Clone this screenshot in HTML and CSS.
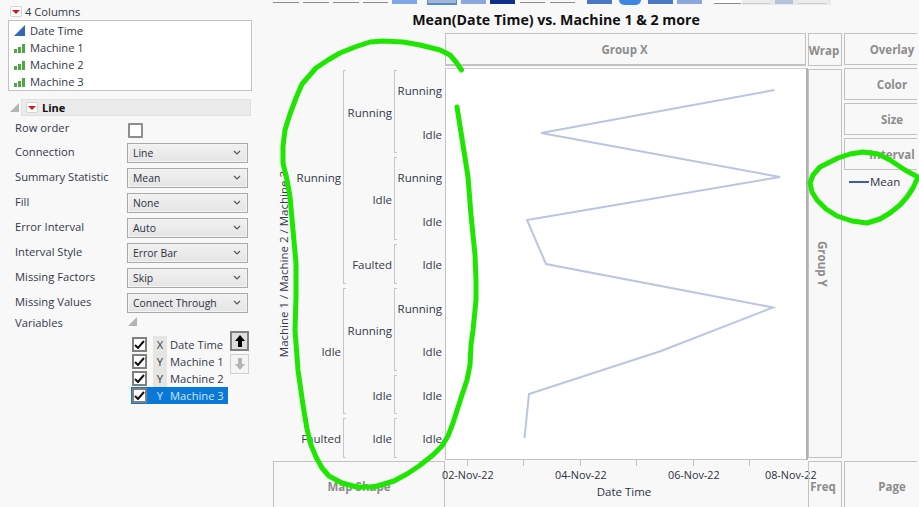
FILE: index.html
```html
<!DOCTYPE html>
<html lang="en">
<head>
    <meta charset="UTF-8">
    <title>Graph Builder</title>
    <link rel="stylesheet" href="styles.css">
</head>
<body>
<div class="app">
    <!-- left panel -->
    <div class="side">
        <div class="cols-head">
            <span class="red-btn"><i></i></span>
            <span>4 Columns</span>
        </div>
        <div class="col-list">
            <div class="col-item">
                <svg class="col-icon" viewBox="0 0 13 12"><polygon points="1,11 12,0 12,11" fill="#3565b5"/></svg>
                Date Time
            </div>
            <div class="col-item">
                <svg class="col-icon" viewBox="0 0 13 12"><g fill="#4ea843"><rect x="1" y="7" width="3" height="4"/><rect x="5" y="5" width="3" height="6"/><rect x="9" y="2" width="3" height="9"/></g></svg>
                Machine 1
            </div>
            <div class="col-item">
                <svg class="col-icon" viewBox="0 0 13 12"><g fill="#4ea843"><rect x="1" y="7" width="3" height="4"/><rect x="5" y="5" width="3" height="6"/><rect x="9" y="2" width="3" height="9"/></g></svg>
                Machine 2
            </div>
            <div class="col-item">
                <svg class="col-icon" viewBox="0 0 13 12"><g fill="#4ea843"><rect x="1" y="7" width="3" height="4"/><rect x="5" y="5" width="3" height="6"/><rect x="9" y="2" width="3" height="9"/></g></svg>
                Machine 3
            </div>
        </div>

        <div class="line-head">
            <svg class="corner" viewBox="0 0 9 9"><polygon points="0,9 9,0 9,9" fill="#b4b4b4"/></svg>
            <div class="line-bar">
                <span class="red-btn"><i></i></span>
                <b>Line</b>
            </div>
        </div>

        <div class="form">
            <label>Row order</label>
            <div><span class="plain-check"></span></div>
            <label class="up">Connection</label>
            <div class="select">Line<svg viewBox="0 0 8 5"><path d="M1 1l3 3 3-3"/></svg></div>
            <label class="up">Summary Statistic</label>
            <div class="select">Mean<svg viewBox="0 0 8 5"><path d="M1 1l3 3 3-3"/></svg></div>
            <label class="up">Fill</label>
            <div class="select">None<svg viewBox="0 0 8 5"><path d="M1 1l3 3 3-3"/></svg></div>
            <label class="up">Error Interval</label>
            <div class="select">Auto<svg viewBox="0 0 8 5"><path d="M1 1l3 3 3-3"/></svg></div>
            <label class="up">Interval Style</label>
            <div class="select">Error Bar<svg viewBox="0 0 8 5"><path d="M1 1l3 3 3-3"/></svg></div>
            <label class="up">Missing Factors</label>
            <div class="select">Skip<svg viewBox="0 0 8 5"><path d="M1 1l3 3 3-3"/></svg></div>
            <label class="up">Missing Values</label>
            <div class="select">Connect Through<svg viewBox="0 0 8 5"><path d="M1 1l3 3 3-3"/></svg></div>
        </div>

        <div class="vars">
            <div class="vars-label">Variables</div>
            <div class="vars-right">
                <svg class="corner" viewBox="0 0 9 9"><polygon points="0,9 9,0 9,9" fill="#b4b4b4"/></svg>
                <div class="vars-body">
                    <div class="var-list">
                        <div class="var-row">
                            <span class="check"><svg viewBox="0 0 11 9"><path d="M1 5l3 3 6-7"/></svg></span>
                            <span class="role">X</span>Date Time
                        </div>
                        <div class="var-row">
                            <span class="check"><svg viewBox="0 0 11 9"><path d="M1 5l3 3 6-7"/></svg></span>
                            <span class="role">Y</span>Machine 1
                        </div>
                        <div class="var-row">
                            <span class="check"><svg viewBox="0 0 11 9"><path d="M1 5l3 3 6-7"/></svg></span>
                            <span class="role">Y</span>Machine 2
                        </div>
                        <div class="var-row selected">
                            <span class="check"><svg viewBox="0 0 11 9"><path d="M1 5l3 3 6-7"/></svg></span>
                            <span class="role">Y</span>Machine 3
                        </div>
                    </div>
                    <div class="move-btns">
                        <span class="move on"><svg viewBox="0 0 10 12"><polygon points="5,0 10,6 7,6 7,12 3,12 3,6 0,6" fill="#000"/></svg></span>
                        <span class="move off"><svg viewBox="0 0 10 12"><polygon points="3,0 7,0 7,6 10,6 5,12 0,6 3,6" fill="#b4b4b4"/></svg></span>
                    </div>
                </div>
            </div>
        </div>
    </div>

    <!-- graph area -->
    <div class="main">
        <div class="toolbar">
            <i class="t-line t27"></i><i class="t-line t27"></i><i class="t-line t27"></i><i class="t-line t26"></i>
            <i class="t-blue t26"></i>
            <i class="t-active ml6"></i>
            <i class="t-grid t26"></i>
            <i class="t-navy t26"></i>
            <i class="t-line t26 ml1"></i><i class="t-line t26 ml1"></i>
            <i class="t-mid t26 ml8"></i>
            <i class="t-round ml3"></i>
            <i class="t-mid t26 ml3"></i>
            <i class="t-grid t26"></i>
            <i class="t-white ml8"></i>
            <div class="t-off">
                <i class="t-pale"></i><i class="t-slate"></i><i class="t-pale"></i>
            </div>
        </div>
        <div class="title">Mean(Date Time) vs. Machine 1 &amp; 2 more</div>

        <div class="builder">
            <div class="corner-cell"></div>
            <div class="zone group-x">Group X</div>
            <div class="zone wrap">Wrap</div>

            <div class="stack">
                <div class="zone stack-box">Overlay</div>
                <div class="zone stack-box">Color</div>
                <div class="zone stack-box">Size</div>
                <div class="zone stack-box">Interval</div>
                <div class="legend"><i></i>Mean</div>
            </div>

            <div class="y-axis">
                <div class="y-title"><span>Machine 1 / Machine 2 / Machine 3</span></div>
                <div class="tree">
                    <div class="group">
                        <div class="name">Running</div>
                        <div class="kids">
                            <div class="group">
                                <div class="name">Running</div>
                                <div class="kids">
                                    <div class="leaf">Running</div>
                                    <div class="leaf">Idle</div>
                                </div>
                            </div>
                            <div class="group">
                                <div class="name">Idle</div>
                                <div class="kids">
                                    <div class="leaf">Running</div>
                                    <div class="leaf">Idle</div>
                                </div>
                            </div>
                            <div class="group">
                                <div class="name">Faulted</div>
                                <div class="kids">
                                    <div class="leaf">Idle</div>
                                </div>
                            </div>
                        </div>
                    </div>
                    <div class="group">
                        <div class="name">Idle</div>
                        <div class="kids">
                            <div class="group">
                                <div class="name">Running</div>
                                <div class="kids">
                                    <div class="leaf">Running</div>
                                    <div class="leaf">Idle</div>
                                </div>
                            </div>
                            <div class="group">
                                <div class="name">Idle</div>
                                <div class="kids">
                                    <div class="leaf">Idle</div>
                                </div>
                            </div>
                        </div>
                    </div>
                    <div class="group">
                        <div class="name">Faulted</div>
                        <div class="kids">
                            <div class="group">
                                <div class="name">Idle</div>
                                <div class="kids">
                                    <div class="leaf">Idle</div>
                                </div>
                            </div>
                        </div>
                    </div>
                </div>
            </div>

            <div class="plot">
                <svg viewBox="0 0 359 390">
                    <polyline points="328.5,21 95,64 334,108 81,151 100,195 327,238.5 215,282 83,325 78.5,369"/>
                </svg>
            </div>
            <div class="zone group-y"><span>Group Y</span></div>

            <div class="zone map-shape">Map Shape</div>
            <div class="x-axis">
                <div class="ticks"><i></i><i></i><i></i><i></i><i></i><i></i></div>
                <div class="x-labels">
                    <span>02-Nov-22</span><span>04-Nov-22</span><span>06-Nov-22</span><span class="last">08-Nov-22</span>
                </div>
                <div class="x-title">Date Time</div>
            </div>
            <div class="zone freq">Freq</div>
            <div class="zone page">Page</div>
        </div>
    </div>
</div>

<!-- green marker drawn on top of the screenshot -->
<svg class="marker" viewBox="0 0 919 507">
    <polyline points="461.5,70 456,62 450,55 440,50 420,45 403,42 383,41 370,42 355,47 340,53 328,60 316,68 302,84 296,98 290,114 285,130 283,146 283,163 287,180 290,197 293,230 296,263 296,297 295,330 298,370 303,405 307,429 311,445 316,457 322,468 329,476 342,483 357,487 374,487 394,481 407,474 419,466 433,455 442,446 448,436 453,423 461,398 467,380 470,365 471,345 473,330 476,300 476,280 475,255 471,215 468,177 463,145 457,107"/>
    <polyline points="918,177 905,170 890,160 878,154 863,152 850,154 838,158 820,167 813,175 810,183 812,192 817,200 826,209 837,216 852,221 867,223 880,219 890,213 900,205 907,197 913,188 918,177"/>
</svg>
</body>
</html>
```

FILE: styles.css
```css
*{
    margin: 0;
    padding: 0;
    box-sizing: border-box;
}
html, body{
    width: 919px;
    height: 507px;
    overflow: hidden;
}
body{
    position: relative;
    background-color: #f8f8f8;
    font-family: "Open Sans", "Noto Sans", sans-serif;
    font-size: 11.5px;
    color: #33384a;
}
.app{
    display: flex;
    height: 507px;
}

/* left panel */
.side{
    width: 273px;
    flex: none;
    padding-top: 3px;
}
.cols-head{
    display: flex;
    align-items: center;
    gap: 3px;
    height: 17px;
    padding-left: 10px;
    font-size: 11.2px;
}
.red-btn{
    display: flex;
    align-items: center;
    justify-content: center;
    width: 12px;
    height: 11px;
    background-color: #fff;
    border: 1px solid #d4d4d4;
    border-radius: 2px;
}
.red-btn i{
    width: 0;
    height: 0;
    border-left: 4px solid transparent;
    border-right: 4px solid transparent;
    border-top: 4px solid #d8141e;
}
.col-list{
    width: 244px;
    height: 71px;
    margin-left: 8px;
    padding-top: 1px;
    background-color: #fff;
    border: 1px solid #c2c2c2;
}
.col-item{
    display: flex;
    align-items: center;
    gap: 4px;
    height: 17px;
    padding-left: 4px;
    font-size: 11.2px;
}
.col-icon{
    width: 13px;
    height: 12px;
}
.line-head{
    display: flex;
    align-items: center;
    gap: 2px;
    height: 17px;
    margin: 8px 0 0 10px;
}
.corner{
    display: block;
    width: 9px;
    height: 9px;
}
.line-bar{
    display: flex;
    align-items: center;
    gap: 4px;
    width: 230px;
    height: 17px;
    padding-left: 4px;
    background-color: #ebebeb;
    border: 1px solid #e0e0e0;
}
.line-bar b{
    font-size: 11px;
    color: #111;
}
.form{
    display: grid;
    grid-template-columns: 112px 121px;
    grid-auto-rows: 25px;
    align-items: center;
    margin-top: -1px;
    padding-left: 15px;
}
.form label{
    font-size: 11.2px;
}
.form label.up{
    padding-bottom: 3px;
}
.plain-check{
    display: block;
    width: 15px;
    height: 15px;
    margin: 5px 0 0 1px;
    background-color: #fff;
    border: 2px solid #8e8e8e;
    border-radius: 1px;
}
.select{
    display: flex;
    align-items: center;
    justify-content: space-between;
    height: 20px;
    padding: 0 6px 0 5px;
    background: linear-gradient(#f1f1f1, #e5e5e5);
    border: 1px solid #a9a9a9;
    box-shadow: inset 0 0 0 1px #f4f4f4;
    font-size: 10.4px;
    color: #2c3040;
}
.select svg{
    width: 8px;
    height: 5px;
    fill: none;
    stroke: #555;
    stroke-width: 1.2;
}
.vars{
    display: flex;
    padding: 0 0 0 15px;
}
.vars-label{
    width: 113px;
    font-size: 11.2px;
}
.vars-right .corner{
    margin-top: 2px;
}
.vars-body{
    display: flex;
    margin: 5px 0 0 3px;
}
.var-list{
    width: 97px;
    margin-top: 5px;
}
.var-row{
    display: flex;
    align-items: center;
    height: 17px;
    font-size: 11.2px;
}
.check{
    display: flex;
    align-items: center;
    justify-content: center;
    width: 15px;
    height: 15px;
    margin: 0 6px 0 1px;
    background-color: #fff;
    border: 2px solid #808080;
}
.check svg{
    width: 11px;
    height: 9px;
    fill: none;
    stroke: #111;
    stroke-width: 2;
}
.role{
    width: 14px;
    height: 17px;
    margin-right: 3px;
    line-height: 17px;
    text-align: center;
    background-color: #e5e5e1;
}
.var-row.selected{
    background-color: #0a78d6;
    color: #cfe6fb;
}
.var-row.selected .role{
    background-color: transparent;
}
.move-btns{
    display: flex;
    flex-direction: column;
    gap: 3px;
    margin-left: 2px;
}
.move{
    display: flex;
    align-items: center;
    justify-content: center;
    width: 19px;
    height: 20px;
}
.move svg{
    width: 10px;
    height: 12px;
}
.move.on{
    background-color: #ddd;
    border: 2px solid #808080;
}
.move.off{
    background-color: #f4f4f4;
    border: 1px solid #cfcfcf;
}

/* top of the graph area, cut off by the crop */
.main{
    flex: 1;
    min-width: 0;
}
.toolbar{
    display: flex;
    gap: 4px;
    height: 5px;
    overflow: hidden;
}
.toolbar i{
    display: block;
    height: 4px;
}
.t27{
    width: 26px;
}
.t26{
    width: 25px;
}
.ml1{
    margin-left: 1px;
}
.ml3{
    margin-left: 3px;
}
.ml6{
    margin-left: 6px;
}
.ml8{
    margin-left: 8px;
}
.t-line{
    background: linear-gradient(#f8f8f8 2px, #8b8b8b 2px, #8b8b8b 3px, transparent 3px);
}
.t-blue{
    background-color: #7da7e8;
}
.toolbar .t-active{
    width: 30px;
    height: 5px;
    background-color: #a9b5d3;
    border: 1px solid #4a8fd8;
    border-top: none;
    border-bottom-width: 2px;
}
.t-grid{
    background-color: #8aa8de;
}
.t-navy{
    background-color: #0f2f8a;
}
.t-mid{
    background-color: #4a78c4;
}
.toolbar .t-round{
    width: 22px;
    height: 5px;
    background-color: #3f86e0;
    border-radius: 0 0 11px 11px;
}
.t-white{
    width: 27px;
    background: linear-gradient(#fff 3px, #8b8b8b 3px);
}
.t-off{
    display: flex;
    gap: 5px;
    width: 89px;
    height: 5px;
    margin-left: -3px;
    background-color: #e9e9e9;
}
.toolbar .t-pale{
    width: 28px;
    background: linear-gradient(#ececec 3px, #cfcfcf 3px);
}
.toolbar .t-slate{
    width: 18px;
    background-color: #b4c2dc;
}
.title{
    width: 566px;
    height: 28px;
    line-height: 30px;
    text-align: center;
    font-size: 14.2px;
    font-weight: bold;
    color: #111;
}
.builder{
    display: grid;
    grid-template-columns: 172px 363px 34px 75px;
    grid-template-rows: 35px 392px 47px;
    column-gap: 0;
}
.zone{
    display: flex;
    align-items: center;
    justify-content: center;
    padding-top: 1px;
    border: 1px solid #c2c2c2;
    font-weight: bold;
    color: #8c8c8c;
}
.group-x{
    margin: 0 2px 2px 0;
    padding-right: 2px;
    border-bottom-width: 2px;
}
.wrap{
    margin-bottom: 2px;
    padding-right: 2px;
}
.stack{
    grid-column: 4;
    grid-row: 1 / 3;
    display: flex;
    flex-direction: column;
    gap: 3px;
    margin-left: 2px;
}
.stack-box{
    height: 32px;
    padding-left: 22px;
    border-right: none;
}
.legend{
    display: flex;
    align-items: center;
    gap: 1px;
    margin: 1px 0 0 5px;
    font-size: 11.5px;
    color: #2c3040;
}
.legend i{
    width: 20px;
    height: 2px;
    background-color: #3f5ba9;
}

/* nested y axis labels */
.y-axis{
    display: flex;
    grid-column: 1;
    grid-row: 2;
}
.y-title{
    display: flex;
    align-items: center;
    justify-content: center;
    width: 21px;
    font-size: 11.5px;
}
.y-title span{
    writing-mode: vertical-rl;
    transform: rotate(180deg);
    white-space: nowrap;
}
.tree{
    flex: 1;
    padding-top: 1px;
}
.group{
    display: flex;
}
.name{
    display: flex;
    align-items: center;
    justify-content: flex-end;
    width: 49px;
    padding-right: 2px;
    flex: none;
}
.kids .name{
    width: 51px;
}
.kids{
    flex: 1;
    background:
        linear-gradient(#c6c6c6, #c6c6c6) 0 1px / 1px calc(100% - 4px) no-repeat,
        linear-gradient(#c6c6c6, #c6c6c6) 0 1px / 3px 1px no-repeat,
        linear-gradient(#c6c6c6, #c6c6c6) 0 calc(100% - 3px) / 3px 1px no-repeat;
}
.leaf{
    display: flex;
    align-items: center;
    justify-content: flex-end;
    height: 43.5px;
    padding-right: 3px;
}

.plot{
    grid-column: 2;
    grid-row: 2;
    background-color: #fff;
    border-top: 1px solid #d0d0d0;
    border-left: 1px solid #c2c2c2;
    border-right: 2px solid #b0b0b0;
    border-bottom: 1px solid #c2c2c2;
}
.plot svg{
    display: block;
    width: 359px;
    height: 390px;
}
.plot polyline{
    fill: none;
    stroke: #b9c5e2;
    stroke-width: 2;
}
.group-y{
    grid-column: 3;
    grid-row: 2;
    margin: 1px 0 2px 0;
    padding-right: 5px;
}
.group-y span{
    writing-mode: vertical-rl;
}
.map-shape{
    grid-column: 1;
    grid-row: 3;
    margin-top: 1px;
    padding-top: 4px;
    border-bottom: none;
}
.x-axis{
    grid-column: 2;
    grid-row: 3;
}
.ticks{
    display: flex;
    gap: 55.4px;
    height: 6px;
    padding-left: 22px;
}
.ticks i{
    width: 1px;
    background-color: #c2c2c2;
}
.x-labels{
    display: flex;
    gap: 62px;
    margin: 1px 0 0 -3px;
    font-size: 10.8px;
    color: #2c3040;
    white-space: nowrap;
}
.x-labels span{
    width: 51px;
    text-align: center;
}
.x-labels .last{
    margin-left: -16px;
}
.x-title{
    margin: 2px 0 0 0;
    padding-right: 5px;
    text-align: center;
    font-size: 11.5px;
    color: #2c3040;
}
.freq{
    grid-column: 3;
    grid-row: 3;
    margin-top: 1px;
    padding: 4px 4px 0 0;
    border-bottom: none;
}
.page{
    grid-column: 4;
    grid-row: 3;
    margin: 1px 0 0 2px;
    padding: 4px 0 0 22px;
    border-right: none;
    border-bottom: none;
}

.marker{
    position: absolute;
    left: 0;
    top: 0;
    width: 919px;
    height: 507px;
    pointer-events: none;
}
.marker polyline{
    fill: none;
    stroke: #1fe600;
    stroke-width: 5;
    stroke-linecap: round;
    stroke-linejoin: round;
}
```
